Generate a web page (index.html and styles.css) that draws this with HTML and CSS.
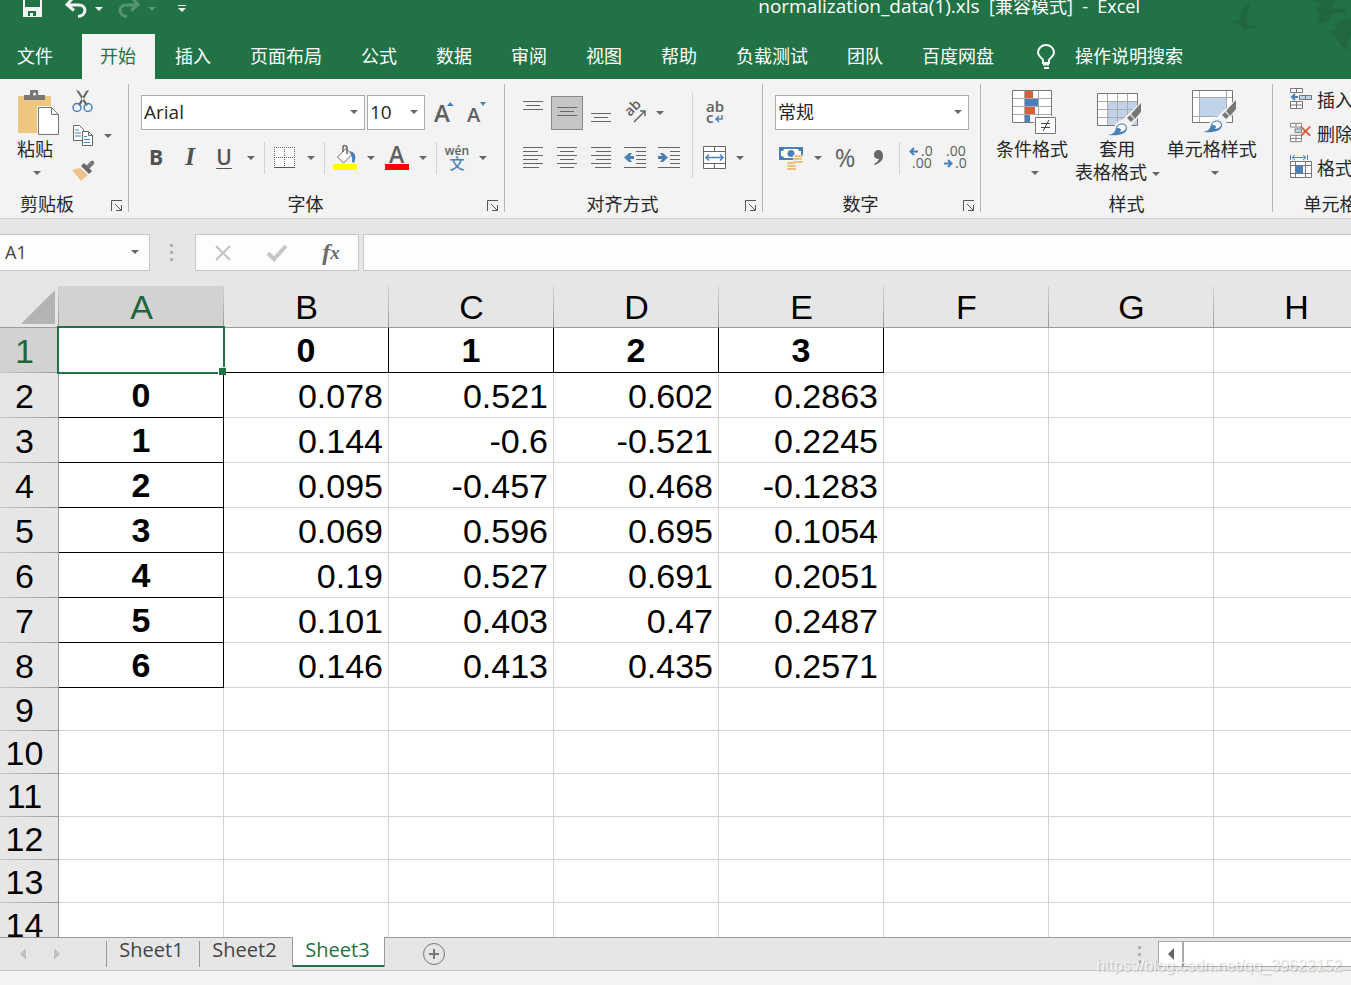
FILE: index.html
```html
<!DOCTYPE html>
<html lang="zh-CN">
<head>
  <meta charset="UTF-8">
  <title>normalization_data(1).xls - Excel</title>
  <link rel="stylesheet" href="styles.css">
</head>
<body>

  <header>
    <svg class="birds" width="140" height="52" viewBox="0 0 140 52">
      <path d="M39 4 L35 19 L38 26 L46 26 L46 29 L37 28 L34 30 L28 25 L21 22 L24 20 L28 21 Q28 8 39 4Z"/>
      <path d="M102 0 L125 0 Q121 4 122 8 L134 9 L135 12 L121 14 Q118 23 109 23 L106 22 L108 14 L104 8 L111 6Z"/>
      <path d="M140 18 Q127 18 124 30 L117 31 L123 35 Q127 44 137 51 L136 44 Q140 38 140 30Z"/>
    </svg>
    <div class="title-bar">
      <div class="quick-access">
        <button aria-label="保存">
          <svg width="20" height="17" viewBox="0 0 20 17"><path d="M0 0h2v7h15V0h2v17H0z" fill="#f3f3f3"/><path d="M5 11h8v5h-3v-3H7v3H5z" fill="#217346"/></svg>
        </button>
        <button class="undo" aria-label="撤消">
          <svg width="22" height="18" viewBox="0 0 22 18"><path d="M8-2 2 4.500l7 6M3 5h11c8 0 8 11-1 11.500" fill="none" stroke="#f3f3f3" stroke-width="3"/></svg>
          <i class="caret"></i>
        </button>
        <button class="redo" aria-label="恢复">
          <svg width="22" height="18" viewBox="0 0 22 18"><path d="M14-2l6 6.500-7 6M19 5H8C0 5 0 16 9 16.500" fill="none" stroke="#f3f3f3" stroke-width="3"/></svg>
          <i class="caret"></i>
        </button>
        <button class="customize" aria-label="自定义快速访问工具栏">
          <svg width="8" height="13" viewBox="0 0 8 13"><path d="M0 5h8v1H0zM0 8h8L4 12z" fill="#f3f3f3"/></svg>
        </button>
      </div>
      <div class="doc-title"><span>normalization_data(1).xls</span>&nbsp; [兼容模式]&nbsp; -&nbsp; Excel</div>
    </div>
    <nav class="tabs">
      <button class="file">文件</button>
      <button class="active">开始</button>
      <button>插入</button>
      <button>页面布局</button>
      <button>公式</button>
      <button>数据</button>
      <button>审阅</button>
      <button>视图</button>
      <button>帮助</button>
      <button>负载测试</button>
      <button>团队</button>
      <button>百度网盘</button>
      <button class="tell-me">
        <svg width="18" height="26" viewBox="0 0 18 26" fill="none" stroke="#fff" stroke-width="2"><path d="M6 19v-3C4 13 1 12 1 8.500a8 7.500 0 0 1 16 0C17 12 14 13 12 16v3zM6 20.500h6M7 24h5"/></svg>
        操作说明搜索
      </button>
    </nav>
  </header>

  <div class="ribbon">
    <section class="group clipboard">
      <div class="group-body">
        <button class="big">
          <svg width="42" height="46" viewBox="0 0 42 46">
            <path d="M0 6h33v37H0z" fill="#edc77f"/>
            <path d="M6 10V5h6V1q0-1 1-1h6q1 0 1 1v4h7v5z" fill="#777"/>
            <circle cx="16.500" cy="4" r="1.500" fill="#f3f3f3"/>
            <path d="M19 16h16l7 7v23H19z" fill="#f3f3f3"/>
            <path d="M20.500 17.500h13l7 7v20h-20zM33.500 17.500v7h7" fill="#fff" stroke="#777"/>
          </svg>
          <span>粘贴</span>
          <i class="caret"></i>
        </button>
        <div class="small-col">
          <button aria-label="剪切">
            <svg width="22" height="24" viewBox="0 0 22 24"><path d="M4 0l3 1 9 14-2 1zM17 0l-3 1-8 14 2 1z" fill="#666"/><g fill="none" stroke="#4a80b8" stroke-width="1.500"><circle cx="5" cy="17.500" r="4"/><circle cx="16" cy="17.500" r="4"/></g></svg>
          </button>
          <button aria-label="复制">
            <svg width="22" height="24" viewBox="0 0 22 24"><path d="M1.500 1.500h6l4 4v11h-10z" fill="#fff" stroke="#666"/><path d="M3 6h4M3 9h6M3 12h6" stroke="#4a80b8"/><path d="M10.500 7.500h6l4 4v10h-10zM16.500 7.500v4h4" fill="#fff" stroke="#666"/><path d="M12 12.500h3M12 15.500h6M12 18.500h6" stroke="#4a80b8"/></svg>
            <i class="caret"></i>
          </button>
          <button aria-label="格式刷">
            <svg width="24" height="24" viewBox="0 0 24 24"><path d="M0 12l8-2 8 7-7 6z" fill="#edc38a"/><path d="M9 8l3-3 8 8-3 3z" fill="#666"/><path d="M14 8l5-5q4-1 3 3l-5 5z" fill="#777"/></svg>
          </button>
        </div>
      </div>
      <div class="group-foot"><span>剪贴板</span>
        <button class="launcher" aria-label="剪贴板设置"><svg width="12" height="12" viewBox="0 0 12 12"><path d="M.5 11V.5H11M4 4l6 6M10.500 5v5.500H5" fill="none" stroke="#555"/></svg></button>
      </div>
    </section>

    <section class="group font">
      <div class="group-body rows">
        <div class="row fields">
          <label class="drop-field font-name"><select aria-label="字体"><option>Arial</option></select></label>
          <label class="drop-field font-size"><select aria-label="字号"><option>10</option></select></label>
          <button class="tool" aria-label="增大字号"><svg width="20" height="24" viewBox="0 0 20 24"><text x="0" y="21" class="glyph" font-size="24">A</text><path d="M13 5l3-4 4 4z" fill="#4a80b8"/></svg></button>
          <button class="tool" aria-label="减小字号"><svg width="20" height="24" viewBox="0 0 20 24"><text x="1" y="21" class="glyph" font-size="20">A</text><path d="M14 1h6l-3 4z" fill="#4a80b8"/></svg></button>
        </div>
        <div class="row">
          <button class="tool wide bold">B</button>
          <button class="tool wide italic">I</button>
          <button class="tool wide underline">U</button>
          <button class="drop" aria-label="下划线选项"><i class="caret"></i></button>
          <i class="rule"></i>
          <button class="tool" aria-label="边框"><svg width="22" height="22" viewBox="0 0 22 22"><path d="M0 0h21v21H0z" fill="#fff"/><path d="M0 .5h21M0 10.500h21M.5 0v20M10.500 0v20M20.500 0v20" stroke="#666" stroke-dasharray="1 1"/><path d="M0 20.500h21" stroke="#555"/></svg></button>
          <button class="drop" aria-label="边框选项"><i class="caret"></i></button>
          <i class="rule"></i>
          <button class="tool" aria-label="填充颜色"><svg width="24" height="26" viewBox="0 0 24 26"><path d="M4.500 12 13 3.500l6 6-8.500 8.500z" fill="#fff" stroke="#666"/><path d="M10 7V2q0-1.500 1.500-1.500T14 2v7" fill="none" stroke="#666" stroke-width="1.500"/><path d="M17 6q8 2 4 12l-2-1q1-4-1-7z" fill="#4a80b8"/><path d="M0 19h24v6H0z" fill="#ff0"/></svg></button>
          <button class="drop" aria-label="填充颜色选项"><i class="caret"></i></button>
          <button class="tool" aria-label="字体颜色"><svg width="24" height="26" viewBox="0 0 24 26"><text x="4" y="18" class="glyph" font-size="23">A</text><path d="M0 19h24v6H0z" fill="#f00"/></svg></button>
          <button class="drop" aria-label="字体颜色选项"><i class="caret"></i></button>
          <i class="rule"></i>
          <button class="tool pinyin"><small>wén</small><b>文</b></button>
          <button class="drop" aria-label="拼音选项"><i class="caret"></i></button>
        </div>
      </div>
      <div class="group-foot"><span>字体</span>
        <button class="launcher" aria-label="字体设置"><svg width="12" height="12" viewBox="0 0 12 12"><path d="M.5 11V.5H11M4 4l6 6M10.500 5v5.500H5" fill="none" stroke="#555"/></svg></button>
      </div>
    </section>

    <section class="group align">
      <div class="group-body">
        <div class="rows">
          <div class="row">
            <button class="tool wide" aria-label="顶端对齐"><svg class="lines" width="20" height="24" viewBox="0 0 20 24"><path d="M0 .5h20M3 4.500h14M0 8.500h20"/></svg></button>
            <button class="tool wide pressed" aria-label="垂直居中"><svg class="lines" width="20" height="24" viewBox="0 0 20 24"><path d="M0 6.500h20M3 10.500h14M0 14.500h20"/></svg></button>
            <button class="tool wide" aria-label="底端对齐"><svg class="lines" width="20" height="24" viewBox="0 0 20 24"><path d="M0 12.500h20M3 16.500h14M0 20.500h20"/></svg></button>
            <button class="tool wide" aria-label="方向"><svg width="22" height="24" viewBox="0 0 22 24"><text x="6" y="16" class="glyph" font-size="14" transform="rotate(-45 6 16)">ab</text><path d="M10 21 21 10M16 10h5v5" fill="none" stroke="#666" stroke-width="1.500"/></svg></button>
            <button class="drop near" aria-label="方向选项"><i class="caret"></i></button>
          </div>
          <div class="row">
            <button class="tool wide" aria-label="左对齐"><svg class="lines" width="20" height="24" viewBox="0 0 20 24"><path d="M0 1.500h20M0 5.500h15M0 9.500h20M0 13.500h15M0 17.500h20M0 21.500h16"/></svg></button>
            <button class="tool wide" aria-label="居中"><svg class="lines" width="20" height="24" viewBox="0 0 20 24"><path d="M0 1.500h20M3 5.500h14M0 9.500h20M3 13.500h14M0 17.500h20M3 21.500h14"/></svg></button>
            <button class="tool wide" aria-label="右对齐"><svg class="lines" width="20" height="24" viewBox="0 0 20 24"><path d="M0 1.500h20M5 5.500h15M0 9.500h20M5 13.500h15M0 17.500h20M4 21.500h16"/></svg></button>
            <button class="tool wide" aria-label="减少缩进量"><svg class="lines" width="22" height="24" viewBox="0 0 22 24"><path d="M0 1.500h22M12 5.500h10M12 9.500h10M12 13.500h10M12 17.500h10M0 21.500h22"/><path class="blue" d="M0 11.500 5 7h3l-2 3h4v3H6l2 3H5z"/></svg></button>
            <button class="tool wide" aria-label="增加缩进量"><svg class="lines" width="22" height="24" viewBox="0 0 22 24"><path d="M0 1.500h22M12 5.500h10M12 9.500h10M12 13.500h10M12 17.500h10M0 21.500h22"/><path class="blue" d="M10 11.500 5 7H2l2 3H0v3h4l-2 3h3z"/></svg></button>
          </div>
        </div>
        <i class="rule tall"></i>
        <div class="rows">
          <div class="row">
            <button class="tool wide" aria-label="自动换行"><svg width="18" height="26" viewBox="0 0 18 26"><text x="0" y="12" class="glyph" font-size="15">ab</text><text x="0" y="23" class="glyph" font-size="15">c</text><path d="M16 15v4h-5M13 16l-3 3 3 3" fill="none" stroke="#4a80b8" stroke-width="1.500"/></svg></button>
          </div>
          <div class="row">
            <button class="tool wide" aria-label="合并后居中"><svg width="24" height="24" viewBox="0 0 24 24"><path d="M.5.5h22v22H.5zM.5 5.500h22M.5 17.500h22M11.500.5v5M11.500 17.500v5" fill="#fff" stroke="#666"/><path d="M3 11.500h17M6 8.500l-3 3 3 3M17 8.500l3 3-3 3" fill="none" stroke="#4a80b8" stroke-width="1.500"/></svg></button>
            <button class="drop near" aria-label="合并选项"><i class="caret"></i></button>
          </div>
        </div>
      </div>
      <div class="group-foot"><span>对齐方式</span>
        <button class="launcher" aria-label="对齐设置"><svg width="12" height="12" viewBox="0 0 12 12"><path d="M.5 11V.5H11M4 4l6 6M10.500 5v5.500H5" fill="none" stroke="#555"/></svg></button>
      </div>
    </section>

    <section class="group number">
      <div class="group-body rows">
        <div class="row">
          <label class="drop-field number-format"><select aria-label="数字格式"><option>常规</option></select></label>
        </div>
        <div class="row">
          <button class="tool wide" aria-label="会计数字格式"><svg width="24" height="24" viewBox="0 0 24 24"><path d="M0 1h24v13H0z" fill="#4a80b8"/><path d="M5 3h14q0 2 3 2v5q-3 0-3 2H5q0-2-3-2V5q3 0 3-2z" fill="#fff"/><circle cx="12" cy="7.500" r="3.500" fill="#4a80b8"/><path d="M14 9h10v9h-7v6H8v-9h6z" fill="#f3f3f3"/><g stroke="#edc07f" stroke-width="2" stroke-linecap="round"><path d="M16 10h7M15 13h7M16 16h7M9 17h6M9 20h7M9 23h7"/></g></svg></button>
          <button class="drop" aria-label="会计格式选项"><i class="caret"></i></button>
          <button class="tool wide percent">%</button>
          <button class="tool wide" aria-label="千位分隔样式"><svg width="12" height="18" viewBox="0 0 12 18"><path d="M1 6a4.500 4.500 0 0 1 5-5q4 1 4 6 0 6-8 9l-1-1q4-2 5-5-5 0-5-4z" fill="#666"/></svg></button>
          <i class="rule"></i>
          <button class="tool wide" aria-label="增加小数位数"><svg width="24" height="24" viewBox="0 0 24 24"><path d="M9 5.500H2M5 2 1.500 5.500 5 9" fill="none" stroke="#4a80b8" stroke-width="2"/><text x="12" y="10" class="glyph thin" font-size="14">.0</text><text x="3" y="22" class="glyph thin" font-size="14">.00</text></svg></button>
          <button class="tool wide" aria-label="减少小数位数"><svg width="24" height="24" viewBox="0 0 24 24"><path d="M1 17.500h7M5 14l3.500 3.500L5 21" fill="none" stroke="#4a80b8" stroke-width="2"/><text x="3" y="10" class="glyph thin" font-size="14">.00</text><text x="12" y="22" class="glyph thin" font-size="14">.0</text></svg></button>
        </div>
      </div>
      <div class="group-foot"><span>数字</span>
        <button class="launcher" aria-label="数字设置"><svg width="12" height="12" viewBox="0 0 12 12"><path d="M.5 11V.5H11M4 4l6 6M10.500 5v5.500H5" fill="none" stroke="#555"/></svg></button>
      </div>
    </section>

    <section class="group styles">
      <div class="group-body">
        <button class="big">
          <svg width="46" height="46" viewBox="0 0 46 46">
            <path d="M.5.5h39v32H.5z" fill="#fff" stroke="#777"/>
            <path d="M1 8.500h38M1 16.500h38M1 24.500h38M12.500 1v31M26.500 1v31" stroke="#aaa"/>
            <path d="M13 1h8v7h-8zM13 17h10v7H13z" fill="#d65f3d"/><path d="M13 9h13v7H13zM13 25h5v7h-5z" fill="#4a80b8"/>
            <path d="M22 26h23v19H22z" fill="#f3f3f3"/><path d="M23.500 27.500h20v16h-20z" fill="#fff" stroke="#777"/>
            <path d="M29 33.500h9M29 37.500h9M37 30l-6 11" stroke="#444"/>
          </svg>
          <span>条件格式</span>
          <i class="caret"></i>
        </button>
        <button class="big">
          <svg width="46" height="46" viewBox="0 0 46 46">
            <path d="M.5 3.500h40v32H.5z" fill="#fff" stroke="#777"/><path d="M11 11h29v24H11z" fill="#c0d3e8"/>
            <path d="M1 11.500h39M1 19.500h39M1 27.500h39M10.500 4v31M20.500 4v31M30.500 4v31" stroke="#aaa"/>
            <path d="M45 11v12L34 36l-5 6-8 4H8q7-4 9-9 2-6 8-7z" fill="#f3f3f3"/>
            <path d="M44 13v9l-6 7-4-5zM33 25l4 4-3 3-4-4z" fill="#777"/>
            <path d="M11 45q7-1 8-7c1-6 11-6 11 0s-8 8-19 7z" fill="#4a80b8"/><path d="M20 38c2-5 9-4 9 0q-1 3-6 4 3-4-3-4z" fill="#fff"/>
          </svg>
          <span>套用</span>
          <span>表格格式 <i class="caret"></i></span>
        </button>
        <button class="big">
          <svg width="46" height="46" viewBox="0 0 46 46">
            <path d="M.5.5h40v32H.5z" fill="#fff" stroke="#777"/><path d="M8 8h26v18H8z" fill="#c0d3e8"/>
            <path d="M1 7.500h39M1 26.500h39M7.500 1v31M34.500 1v31" stroke="#aaa"/>
            <path d="M45 8v12L34 33l-5 6-8 4H8q7-4 9-9 2-6 8-7z" fill="#f3f3f3"/>
            <path d="M44 10v9l-6 7-4-5zM33 22l4 4-3 3-4-4z" fill="#777"/>
            <path d="M11 42q7-1 8-7c1-6 11-6 11 0s-8 8-19 7z" fill="#4a80b8"/><path d="M20 35c2-5 9-4 9 0q-1 3-6 4 3-4-3-4z" fill="#fff"/>
          </svg>
          <span>单元格样式</span>
          <i class="caret"></i>
        </button>
      </div>
      <div class="group-foot"><span>样式</span></div>
    </section>

    <section class="group cells">
      <div class="group-body">
        <button><svg width="22" height="24" viewBox="0 0 22 24"><path d="M.5 1.500h12v4H.5zM6.500 1v4M.5 14.500h12v7H.5zM.5 18h12M6.500 14v7" fill="#fff" stroke="#777"/><path d="M9.500 8.500h12v4h-12zM15.500 8v4" fill="#c0d3e8" stroke="#777"/><path d="M8 10H2M5 7l-3 3 3 3" fill="none" stroke="#4a80b8" stroke-width="2"/></svg>插入</button>
        <button><svg width="24" height="24" viewBox="0 0 24 24"><path d="M.5 1.500h12v4H.5zM6.500 1v4M.5 14.500h12v7H.5zM.5 18h12M6.500 14v7" fill="#fff" stroke="#777"/><path d="M5.500 7.500h7v4h-7z" fill="#c0d3e8" stroke="#777"/><path d="M12 5l10 10M22 5 12 15" stroke="#d65f3d" stroke-width="2"/></svg>删除</button>
        <button><svg width="22" height="24" viewBox="0 0 22 24"><path d="M.5 6.500h21v16H.5zM.5 10.500h21M.5 18.500h21M5.500 7v15M15.500 7v15" fill="#fff" stroke="#777"/><path d="M6 10h7v8H6z" fill="#4a80b8"/><path d="M.5 0v5M17.500 0v5M2 2.500h14M5 0 2 2.500 5 5M13 0l3 2.500L13 5" fill="none" stroke="#4a80b8"/></svg>格式</button>
      </div>
      <div class="group-foot"><span>单元格</span></div>
    </section>
  </div>

  <div class="formula-bar">
    <label class="drop-field name-box"><input type="text" value="A1" aria-label="名称框"></label>
    <i class="dots"></i>
    <div class="formula-buttons">
      <button aria-label="取消"><svg width="18" height="18" viewBox="0 0 18 18"><path d="M2 2l14 14M16 2 2 16" stroke="#c2c2c2" stroke-width="2"/></svg></button>
      <button aria-label="输入"><svg width="20" height="18" viewBox="0 0 20 18"><path d="M1 9l6 6L19 2" fill="none" stroke="#c6c6c6" stroke-width="4"/></svg></button>
      <button class="fx" aria-label="插入函数">f<small>x</small></button>
    </div>
    <input class="formula" type="text" aria-label="编辑栏">
  </div>

  <main class="sheet">
    <table>
      <thead>
        <tr><th class="corner"><svg width="34" height="34" viewBox="0 0 34 34"><path d="M34 0v34H0z" fill="#b4b4b4"/></svg></th><th class="current">A</th><th>B</th><th>C</th><th>D</th><th>E</th><th>F</th><th>G</th><th>H</th></tr>
      </thead>
      <tbody class="data">
        <tr><th class="current">1</th><td class="selected"></td><td class="key">0</td><td class="key">1</td><td class="key">2</td><td class="key">3</td><td></td><td></td><td></td></tr>
        <tr><th>2</th><td class="key">0</td><td>0.078</td><td>0.521</td><td>0.602</td><td>0.2863</td><td></td><td></td><td></td></tr>
        <tr><th>3</th><td class="key">1</td><td>0.144</td><td>-0.6</td><td>-0.521</td><td>0.2245</td><td></td><td></td><td></td></tr>
        <tr><th>4</th><td class="key">2</td><td>0.095</td><td>-0.457</td><td>0.468</td><td>-0.1283</td><td></td><td></td><td></td></tr>
        <tr><th>5</th><td class="key">3</td><td>0.069</td><td>0.596</td><td>0.695</td><td>0.1054</td><td></td><td></td><td></td></tr>
        <tr><th>6</th><td class="key">4</td><td>0.19</td><td>0.527</td><td>0.691</td><td>0.2051</td><td></td><td></td><td></td></tr>
        <tr><th>7</th><td class="key">5</td><td>0.101</td><td>0.403</td><td>0.47</td><td>0.2487</td><td></td><td></td><td></td></tr>
        <tr><th>8</th><td class="key">6</td><td>0.146</td><td>0.413</td><td>0.435</td><td>0.2571</td><td></td><td></td><td></td></tr>
      </tbody>
      <tbody>
        <tr><th>9</th><td></td><td></td><td></td><td></td><td></td><td></td><td></td><td></td></tr>
        <tr><th>10</th><td></td><td></td><td></td><td></td><td></td><td></td><td></td><td></td></tr>
        <tr><th>11</th><td></td><td></td><td></td><td></td><td></td><td></td><td></td><td></td></tr>
        <tr><th>12</th><td></td><td></td><td></td><td></td><td></td><td></td><td></td><td></td></tr>
        <tr><th>13</th><td></td><td></td><td></td><td></td><td></td><td></td><td></td><td></td></tr>
        <tr><th>14</th><td></td><td></td><td></td><td></td><td></td><td></td><td></td><td></td></tr>
      </tbody>
    </table>
  </main>

  <footer>
    <div class="sheet-bar">
      <div class="sheet-nav">
        <button aria-label="上一个"><svg width="6" height="12" viewBox="0 0 6 12"><path d="M6 0v12L0 6z" fill="#c2c2c2"/></svg></button>
        <button aria-label="下一个"><svg width="6" height="12" viewBox="0 0 6 12"><path d="M0 0v12l6-6z" fill="#c2c2c2"/></svg></button>
      </div>
      <div class="sheet-tabs">
        <button>Sheet1</button>
        <button>Sheet2</button>
        <button class="active">Sheet3</button>
      </div>
      <button class="add-sheet" aria-label="新工作表"><svg width="24" height="24" viewBox="0 0 24 24" fill="none" stroke="#777"><circle cx="12" cy="12" r="10.500"/><path d="M7 12h10M12 7v10" stroke-width="2"/></svg></button>
      <i class="dots"></i>
      <div class="scroll">
        <button aria-label="向左滚动"><svg width="6" height="12" viewBox="0 0 6 12"><path d="M6 0v12L0 6z" fill="#666"/></svg></button>
        <div class="thumb"></div>
      </div>
    </div>
    <div class="status"></div>
    <div class="watermark">https://blog.csdn.net/qq_39622152</div>
  </footer>

</body>
</html>
```
FILE: styles.css
```css
* {
  box-sizing: border-box;
}

body {
  margin: 0;
  height: 100vh;
  display: flex;
  flex-direction: column;
  overflow: hidden;
  font-family: "Open Sans", "Noto Sans CJK SC", sans-serif;
  font-size: 18px;
  color: #262626;
  background: #e6e6e6;
}

button {
  display: flex;
  align-items: center;
  justify-content: center;
  flex-shrink: 0;
  padding: 0;
  border: 0;
  background: none;
  font: inherit;
  color: inherit;
  white-space: nowrap;
}

svg {
  display: block;
  flex-shrink: 0;
  overflow: visible;
}

.caret {
  display: inline-block;
  border: 4px solid transparent;
  border-top-color: #666;
  border-bottom: 0;
}

/* title and tabs */
header {
  position: relative;
  background: #217346;
  color: #fff;
}

.birds {
  position: absolute;
  top: 0;
  right: 0;
  overflow: hidden;
  fill: #20673f;
}

.title-bar {
  position: relative;
  height: 34px;
  display: flex;
  justify-content: space-between;
}

.quick-access {
  display: flex;
  align-items: flex-start;
  padding-left: 23px;
}

.quick-access .caret {
  border-top-color: #f3f3f3;
  margin-left: 8px;
}

.undo {
  margin-left: 22px;
}

.redo {
  margin-left: 15px;
  opacity: 0.25;
}

.customize {
  margin-left: 22px;
}

.doc-title {
  line-height: 12px;
  padding-right: 211px;
}

.doc-title span {
  font-size: 19px;
}

.tabs {
  position: relative;
  display: flex;
  gap: 2px;
  height: 45px;
}

.tabs button {
  padding: 0 19px 4px 18px;
}

.tabs .file {
  padding: 0 27px 4px 17px;
}

.tabs .active {
  background: #f3f3f3;
  color: #217346;
}

.tabs .tell-me {
  gap: 20px;
  padding-left: 22px;
}

.tell-me svg {
  margin-top: 4px;
}

/* ribbon */
.ribbon {
  display: flex;
  flex-shrink: 0;
  padding: 5px 0 6px;
  background: #f3f3f3;
  border-bottom: 1px solid #d2d2d2;
  overflow: hidden;
}

.group {
  display: flex;
  flex-direction: column;
  justify-content: space-between;
  flex-shrink: 0;
  height: 128px;
  border-right: 1px solid #b4b4b4;
}

.group-body {
  display: flex;
  padding-top: 6px;
}

.group-foot {
  display: flex;
  align-items: center;
  height: 16px;
  line-height: 16px;
}

.group-foot span {
  flex: 1;
  text-align: center;
  white-space: nowrap;
}

.launcher {
  width: 22px;
  padding-top: 3px;
}

.big {
  flex-direction: column;
  justify-content: flex-start;
  line-height: 23px;
}

.big svg {
  margin-bottom: 2px;
}

.big > .caret {
  margin: 10px 0 0 6px;
}

.big span .caret {
  vertical-align: middle;
}

.clipboard {
  width: 129px;
}

.clipboard .group-body {
  padding-left: 17px;
  gap: 11px;
}

.clipboard .big span {
  margin-right: 8px;
}

.clipboard .big > .caret {
  margin-left: 0;
  margin-right: 4px;
}

.clipboard .group-foot span {
  padding-right: 12px;
}

.small-col {
  display: flex;
  flex-direction: column;
  align-items: flex-start;
  gap: 10px;
}

.small-col .caret {
  margin-left: 10px;
}

.rows {
  display: flex;
  flex-direction: column;
  gap: 10px;
}

.group-body.rows,
.align .group-body {
  padding-top: 11px;
}

.row {
  display: flex;
  align-items: center;
  height: 35px;
}

.tool {
  width: 32px;
  height: 34px;
}

.tool.wide {
  width: 34px;
}

.drop {
  width: 20px;
  height: 34px;
}

.drop.near {
  width: 16px;
}

.rule {
  width: 1px;
  height: 32px;
  margin: 0 4px 0 3px;
  background: #d2d2d2;
}

.rule.tall {
  height: 85px;
  margin: -2px 5px 0 6px;
}

.glyph {
  font-family: "Open Sans", sans-serif;
  font-weight: 600;
  fill: #606060;
}

.glyph.thin {
  font-weight: 400;
}

.lines {
  fill: none;
  stroke: #666;
}

.lines .blue {
  fill: #4a80b8;
  stroke: none;
}

.drop-field {
  position: relative;
  display: block;
  height: 35px;
}

.drop-field::after {
  content: "";
  position: absolute;
  top: 15px;
  right: 7px;
  border: 4px solid transparent;
  border-top-color: #666;
  border-bottom: 0;
}

.drop-field select,
.drop-field input {
  appearance: none;
  width: 100%;
  height: 100%;
  padding: 0 2px 2px;
  border: 1px solid #ababab;
  border-radius: 0;
  background: #fff;
  font: inherit;
  color: #262626;
}

.font {
  width: 376px;
}

.font .group-body {
  padding-left: 10px;
}

.fields {
  padding-left: 2px;
}

.font-name {
  width: 224px;
  margin-right: 2px;
}

.font-size {
  width: 58px;
  margin-right: 3px;
}

.font-name select,
.font-size select {
  font-size: 19px;
}

.bold,
.italic,
.underline {
  padding-bottom: 2px;
  font-size: 21px;
  font-weight: 700;
  color: #505050;
}

.italic {
  font-family: "Liberation Serif", serif;
  font-style: italic;
  font-size: 25px;
}

.underline {
  font-weight: 600;
  text-decoration: underline;
  text-decoration-thickness: 1px;
  text-underline-offset: 3px;
}

.pinyin {
  flex-direction: column;
}

.pinyin small {
  font-size: 12px;
  font-weight: 600;
  line-height: 10px;
  color: #606060;
}

.pinyin b {
  font-size: 15px;
  font-weight: 500;
  line-height: 14px;
  color: #4a80b8;
}

.align {
  width: 258px;
}

.align .group-body {
  padding-left: 11px;
}

.align .rows:first-child {
  width: 170px;
}

.pressed {
  background: #c6c6c6;
  border: 1px solid #888;
}

.tool.pressed {
  width: 32px;
  margin: 0 1px;
}

.number {
  width: 218px;
}

.number .group-body {
  padding-left: 11px;
}

.number-format {
  width: 194px;
  margin-left: 1px;
}

.percent {
  padding-bottom: 2px;
  font-size: 25px;
  color: #606060;
}

.styles {
  width: 292px;
}

.styles .group-body {
  padding-left: 15px;
  gap: 7px;
}

.styles .big svg {
  margin-left: 6px;
}

.cells {
  width: 116px;
}

.cells .group-body {
  flex-direction: column;
  align-items: flex-start;
  gap: 10px;
  padding: 3px 0 0 17px;
}

.cells button {
  gap: 5px;
  height: 24px;
}

.cells svg {
  width: 22px;
}

/* formula bar */
.formula-bar {
  display: flex;
  flex-shrink: 0;
  padding: 15px 0;
}

.name-box {
  width: 150px;
  height: 37px;
}

.name-box input {
  padding-left: 5px;
  border-color: #c6c6c6;
  border-left: 0;
  background: #fdfdfd;
  color: #444;
}

.name-box::after {
  top: 16px;
  right: 11px;
}

.dots {
  width: 3px;
  height: 17px;
  background: repeating-linear-gradient(#b0b0b0 0 3px, transparent 3px 7px);
}

.formula-bar .dots {
  margin: 10px 22px 0 20px;
}

.formula-buttons {
  display: flex;
  width: 164px;
  height: 37px;
  margin-right: 4px;
  background: #fdfdfd;
  border: 1px solid #c6c6c6;
}

.formula-buttons button {
  flex: 1;
}

.fx {
  font-family: "Liberation Serif", serif;
  font-style: italic;
  font-weight: 700;
  font-size: 24px;
  color: #6a6a6a;
}

.fx small {
  font-size: 19px;
}

.formula {
  flex: 1;
  min-width: 0;
  height: 37px;
  border: 1px solid #c6c6c6;
  border-right: 0;
  background: #fdfdfd;
}

/* grid */
.sheet {
  flex: 1;
  min-height: 0;
  overflow: hidden;
}

.sheet table {
  width: 1379px;
  table-layout: fixed;
  border-collapse: separate;
  border-spacing: 0;
  font-family: "Liberation Sans", Arial, sans-serif;
  font-size: 34px;
  line-height: 38px;
  color: #000;
}

.sheet th {
  padding: 1px 0 0;
  background: linear-gradient(#d2d2d2, #9b9b9b) right / 1px 100% no-repeat #e6e6e6;
  border-bottom: 1px solid #9b9b9b;
  font-weight: 400;
}

.sheet thead th {
  height: 42px;
}

.sheet thead .corner {
  width: 59px;
  padding: 1px 3px 0 21px;
}

.sheet tbody th {
  height: 43px;
  padding-right: 9px;
  background: linear-gradient(90deg, #c6c6c6, #9b9b9b) bottom / 100% 1px no-repeat #e6e6e6;
  border-right: 1px solid #9b9b9b;
  border-bottom: 0;
}

.sheet th.current {
  background-color: #d2d2d2;
  color: #1e6540;
}

.sheet td {
  padding: 2px 5px 0 0;
  background: #fff;
  border-right: 1px solid #d4d4d4;
  border-bottom: 1px solid #d4d4d4;
  text-align: right;
}

.sheet .data th {
  height: 45px;
}

.sheet .key {
  padding: 0;
  border-color: #000;
  font-weight: 700;
  text-align: center;
}

.sheet .selected {
  position: relative;
}

.selected::before {
  content: "";
  position: absolute;
  inset: -2px;
  border: 2px solid #217346;
}

.selected::after {
  content: "";
  position: absolute;
  right: -3px;
  bottom: -3px;
  width: 7px;
  height: 7px;
  background: #217346;
  border: solid #fff;
  border-width: 1px 0 0 1px;
}

/* bottom bars */
footer {
  position: relative;
  flex-shrink: 0;
}

.sheet-bar {
  display: flex;
  height: 34px;
  background: #e6e6e6;
  border-top: 1px solid #9b9b9b;
  border-bottom: 1px solid #c6c6c6;
}

.sheet-nav {
  display: flex;
  gap: 28px;
  width: 106px;
  padding-left: 20px;
}

.sheet-tabs {
  display: flex;
  height: 30px;
  margin-top: -1px;
}

.sheet-tabs button {
  width: 93px;
  padding: 0 2px 5px 0;
  background: linear-gradient(#9b9b9b, #9b9b9b) 0 4px / 1px 26px no-repeat;
  font-size: 20px;
  color: #444;
}

.sheet-tabs .active {
  background: #fff;
  border: solid #9b9b9b;
  border-width: 0 1px;
  box-shadow: inset 0 -2px #217346;
  color: #217346;
}

.add-sheet {
  margin-left: 37px;
}

.sheet-bar .dots {
  margin: 8px 17px 0 auto;
}

.scroll {
  display: flex;
  width: 193px;
  height: 26px;
  margin-top: 3px;
  background: #fff;
  border: 1px solid #ababab;
  border-right: 0;
}

.scroll button {
  width: 23px;
}

.thumb {
  flex: 1;
  border-left: 2px solid #ababab;
}

.status {
  height: 14px;
  background: #f3f3f3;
}

.watermark {
  position: absolute;
  right: 9px;
  bottom: 9px;
  font-family: "Liberation Sans", Arial, sans-serif;
  font-size: 16px;
  line-height: 20px;
  color: rgba(255, 255, 255, 0.7);
  text-shadow: 1px 1px 1px rgba(0, 0, 0, 0.2);
}
```
